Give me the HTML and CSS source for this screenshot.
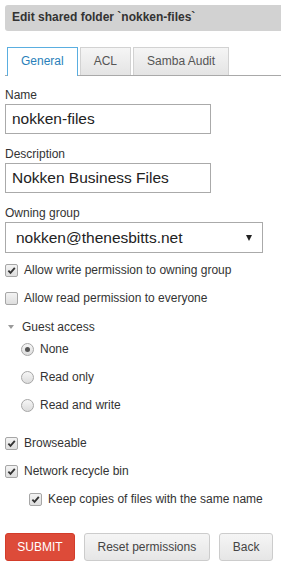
FILE: index.html
```html
<!DOCTYPE html>
<html lang="en">
<head>
    <meta charset="UTF-8">
    <title>Edit shared folder</title>
    <link rel="stylesheet" href="styles.css">
</head>
<body>
    <div class="title-bar">Edit shared folder `nokken-files`</div>

    <ul class="tabs">
        <li class="tab active">General</li>
        <li class="tab">ACL</li>
        <li class="tab">Samba Audit</li>
    </ul>

    <form class="share-form">
        <div class="field">
            <label class="field-label">Name</label>
            <input type="text" class="text-input" value="nokken-files">
        </div>
        <div class="field">
            <label class="field-label">Description</label>
            <input type="text" class="text-input" value="Nokken Business Files">
        </div>
        <div class="field field-last">
            <label class="field-label">Owning group</label>
            <div class="select-box">
                <span>nokken@thenesbitts.net</span>
                <span class="select-arrow"></span>
            </div>
        </div>

        <div class="option first">
            <span class="checkbox"><svg viewBox="0 0 12 12"><path d="M2.6 6.2 L4.9 8.6 L9.6 3.2"/></svg></span>
            Allow write permission to owning group
        </div>
        <div class="option">
            <span class="checkbox"></span>
            Allow read permission to everyone
        </div>

        <div class="option guest">
            <span class="caret"></span>
            Guest access
        </div>
        <div class="option radio-row first-radio">
            <span class="radio checked"></span>
            None
        </div>
        <div class="option radio-row">
            <span class="radio"></span>
            Read only
        </div>
        <div class="option radio-row">
            <span class="radio"></span>
            Read and write
        </div>

        <div class="option spaced">
            <span class="checkbox"><svg viewBox="0 0 12 12"><path d="M2.6 6.2 L4.9 8.6 L9.6 3.2"/></svg></span>
            Browseable
        </div>
        <div class="option">
            <span class="checkbox"><svg viewBox="0 0 12 12"><path d="M2.6 6.2 L4.9 8.6 L9.6 3.2"/></svg></span>
            Network recycle bin
        </div>
        <div class="option nested">
            <span class="checkbox"><svg viewBox="0 0 12 12"><path d="M2.6 6.2 L4.9 8.6 L9.6 3.2"/></svg></span>
            Keep copies of files with the same name
        </div>

        <div class="actions">
            <button type="button" class="btn btn-submit">SUBMIT</button>
            <button type="button" class="btn">Reset permissions</button>
            <button type="button" class="btn">Back</button>
        </div>
    </form>
</body>
</html>
```

FILE: styles.css
```css
* {
    margin: 0;
    padding: 0;
    box-sizing: border-box;
    font-family: "Liberation Sans", Arial, sans-serif;
}

body {
    background: #ffffff;
    color: #333333;
    padding: 5px 0 0 5px;
    width: 281px;
    overflow: hidden;
}

.title-bar {
    height: 26px;
    line-height: 25px;
    background: #d2d2d2;
    border-radius: 3px 0 0 3px;
    padding-left: 7px;
    font-size: 12px;
    font-weight: bold;
    color: #333333;
}

.tabs {
    list-style: none;
    display: flex;
    gap: 2px;
    margin-top: 16px;
    padding-left: 2px;
    border-bottom: 1px solid #a9a9a9;
}

.tab {
    height: 28px;
    line-height: 27px;
    padding: 0 13px;
    font-size: 12px;
    color: #555555;
    background: linear-gradient(#f5f5f5, #e4e4e4);
    border: 1px solid #d2d2d2;
    border-bottom: none;
}

.tab.active {
    background: #ffffff;
    color: #2a7fba;
    border-color: #5aaee0;
    margin-bottom: -1px;
    height: 29px;
}

.share-form {
    margin-top: 12px;
}

.field {
    margin-bottom: 13px;
}

.field-last {
    margin-bottom: 0;
}

.field-label {
    display: block;
    font-size: 12px;
    line-height: 14px;
    color: #333333;
    margin-bottom: 2px;
}

.text-input {
    display: block;
    width: 206px;
    height: 30px;
    border: 1px solid #aaaaaa;
    padding: 0 6px;
    font-size: 15.5px;
    color: #222222;
    background: #ffffff;
    outline: none;
}

.select-box {
    display: flex;
    align-items: center;
    justify-content: space-between;
    width: 258px;
    height: 31px;
    border: 1px solid #aaaaaa;
    padding: 0 10px 0 10px;
    font-size: 15.5px;
    color: #222222;
}

.select-arrow {
    width: 0;
    height: 0;
    border-left: 3.5px solid transparent;
    border-right: 3.5px solid transparent;
    border-top: 6px solid #222222;
}

.option {
    display: flex;
    align-items: center;
    height: 20px;
    margin-top: 8px;
    font-size: 12px;
    color: #333333;
}

.option.first {
    margin-top: 7px;
}

.option.guest {
    margin-top: 9px;
    padding-left: 3px;
}

.option.first-radio {
    margin-top: 2px;
}

.option.spaced {
    margin-top: 18px;
}

.option.nested {
    padding-left: 24px;
}

.radio-row {
    padding-left: 16px;
}

.checkbox {
    flex: none;
    width: 13px;
    height: 13px;
    margin-right: 6px;
    border: 1px solid #a6a6a6;
    border-radius: 2px;
    background: linear-gradient(#f3f3f3, #dedede);
    display: flex;
}

.checkbox svg {
    width: 11px;
    height: 11px;
}

.checkbox path {
    fill: none;
    stroke: #333333;
    stroke-width: 2;
}

.caret {
    width: 0;
    height: 0;
    border-left: 3.5px solid transparent;
    border-right: 3.5px solid transparent;
    border-top: 4px solid #9a9a9a;
    margin-right: 8px;
}

.radio {
    flex: none;
    width: 13px;
    height: 13px;
    margin-right: 6px;
    border: 1px solid #a6a6a6;
    border-radius: 50%;
    background: linear-gradient(#f6f6f6, #dcdcdc);
    display: flex;
    align-items: center;
    justify-content: center;
}

.radio.checked::after {
    content: "";
    width: 5px;
    height: 5px;
    border-radius: 50%;
    background: #555555;
}

.actions {
    display: flex;
    gap: 8.5px;
    margin-top: 24px;
}

.btn {
    height: 28px;
    padding: 0 13px;
    font-size: 12px;
    color: #444444;
    background: linear-gradient(#f5f5f5, #e6e6e6);
    border: 1px solid #cccccc;
    border-radius: 3px;
    cursor: pointer;
}

.btn-submit {
    width: 70px;
    padding: 0;
    color: #ffffff;
    background: #dd4b39;
    border-color: #d33c2a;
}
```
